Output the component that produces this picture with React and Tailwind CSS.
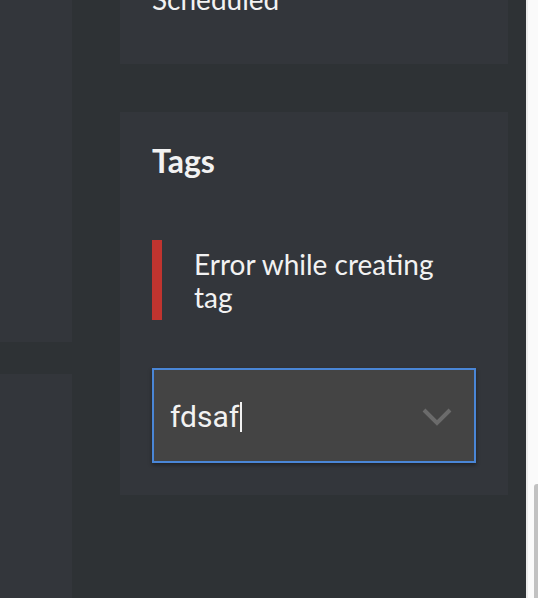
export default function App() {
  return (
    <div
      className="flex h-[598px] w-[538px] overflow-hidden bg-[#2e3235] text-[#f2f2f2]"
      style={{ fontFamily: 'Lato, "Open Sans", sans-serif' }}
    >
      {/* left column */}
      <div className="flex w-[72px] shrink-0 flex-col gap-[32px]">
        <div className="h-[342px] bg-[#33363b]" />
        <div className="flex-1 bg-[#33363b]" />
      </div>

      {/* main column */}
      <div className="ml-[48px] flex w-[388px] shrink-0 flex-col gap-[48px]">
        <div className="h-[64px] overflow-hidden bg-[#33363b] px-8">
          <div className="-mt-[16px] text-[28px] leading-[30px]">Scheduled</div>
        </div>

        <div className="bg-[#33363b] px-8 pt-[30px] pb-8">
          <h2 className="text-[32px] font-bold leading-[38px]">Tags</h2>

          <div className="mt-[60px] flex h-[80px]">
            <div className="w-[10px] shrink-0 bg-[#c0342f]" />
            <p className="pt-[8px] pl-[32px] pr-4 text-[28px] leading-[33px]">
              Error while creating tag
            </p>
          </div>

          <div className="mt-[48px] flex h-[95px] w-[324px] items-center border-2 border-[#4a86d6] bg-[#444444] pl-4 pr-[22px] shadow-[0_2px_4px_rgba(0,0,0,0.4)]">
            <span
              className="pt-[3px] text-[30px] leading-[34px]"
              style={{ fontFamily: 'Roboto, "Noto Sans", sans-serif' }}
            >
              fdsaf
            </span>
            <span className="ml-[1px] mt-[3px] h-[30px] w-[2px] bg-[#f2f2f2]" />
            <div className="flex-1" />
            <svg width="30" height="18" viewBox="0 0 30 18" className="mt-[2px] shrink-0">
              <path d="M2 2 L15 15 L28 2" fill="none" stroke="#6b6b6b" strokeWidth="4" />
            </svg>
          </div>
        </div>
      </div>

      {/* scrollbar */}
      <div className="ml-[18px] flex w-[12px] shrink-0 flex-col border-l-2 border-[#ebebeb] bg-[#fafafa]">
        <div className="flex-1" />
        <div className="ml-[6px] h-[114px] rounded-tl-[3px] bg-[#c1c1c1]" />
      </div>
    </div>
  )
}
